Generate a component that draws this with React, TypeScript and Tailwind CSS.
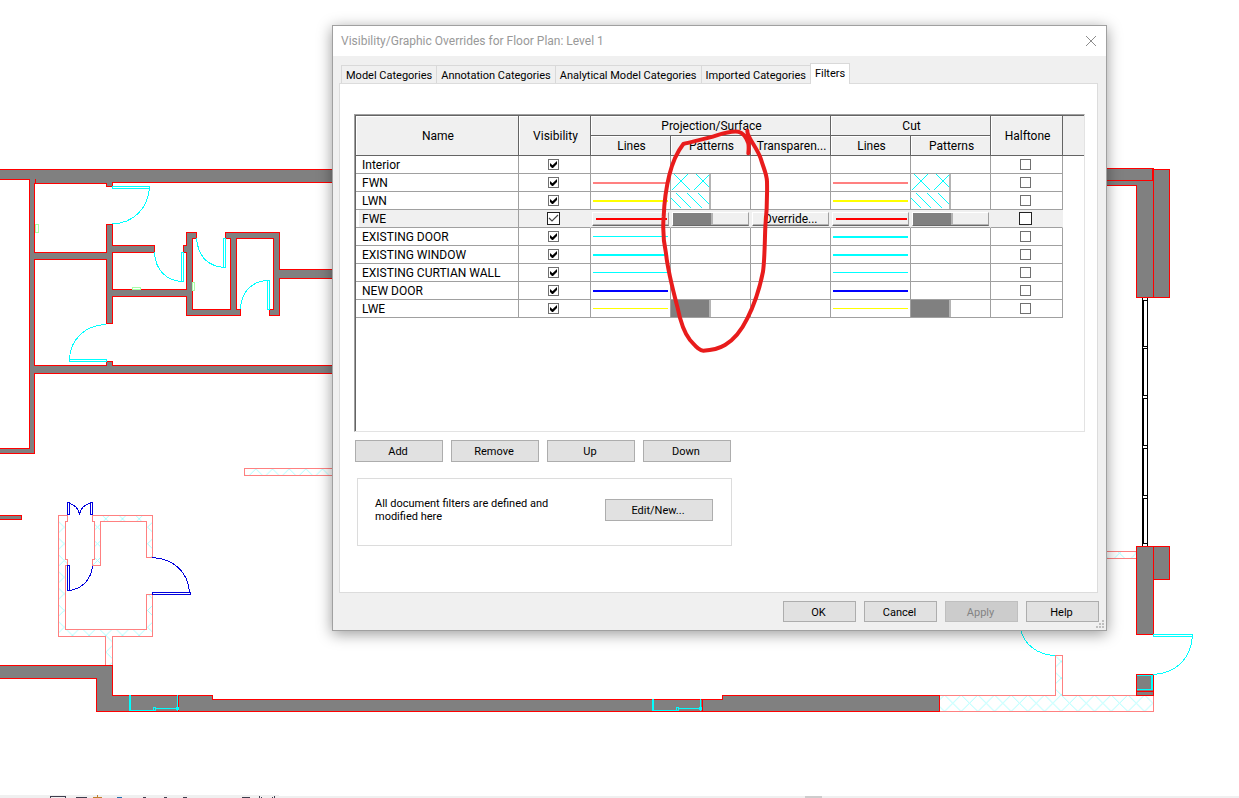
import { useState } from 'react';
import type { ReactNode } from 'react';
import clsx from 'clsx';

type Stroke = { color: string; thick?: boolean; cutThick?: boolean };
type Pattern = 'cross' | 'diagonal' | 'solid';
type Filter = { name: string; line?: Stroke; pattern?: Pattern };

const filters: Filter[] = [
  { name: 'Interior' },
  { name: 'FWN', line: { color: '#ff8080', thick: true, cutThick: true }, pattern: 'cross' },
  { name: 'LWN', line: { color: '#ffff00', thick: true, cutThick: true }, pattern: 'diagonal' },
  { name: 'FWE', line: { color: '#ff0000', thick: true, cutThick: true }, pattern: 'solid' },
  { name: 'EXISTING DOOR', line: { color: '#00ffff', cutThick: true } },
  { name: 'EXISTING WINDOW', line: { color: '#00ffff', thick: true, cutThick: true } },
  { name: 'EXISTING CURTIAN WALL', line: { color: '#00ffff' } },
  { name: 'NEW DOOR', line: { color: '#0000ff', thick: true, cutThick: true } },
  { name: 'LWE', line: { color: '#ffff00' }, pattern: 'solid' },
];

const tabs = [
  'Model Categories',
  'Annotation Categories',
  'Analytical Model Categories',
  'Imported Categories',
  'Filters',
];

// [left, top, right, bottom], edges included
const walls = [
  [-2, 169, 34, 179],
  [29, 169, 34, 453],
  [-2, 448, 34, 453],
  [29, 169, 112, 183],
  [106, 170, 112, 186],
  [106, 169, 340, 182],
  [33, 252, 108, 259],
  [106, 224, 112, 323],
  [111, 245, 154, 252],
  [111, 289, 188, 296],
  [183, 245, 188, 252],
  [186, 232, 192, 315],
  [186, 232, 196, 238],
  [186, 309, 240, 315],
  [230, 232, 236, 315],
  [225, 232, 279, 238],
  [273, 232, 279, 315],
  [269, 309, 279, 315],
  [278, 269, 340, 278],
  [33, 365, 340, 373],
  [106, 361, 112, 368],
  [-2, 515, 21, 519],
  [-2, 665, 112, 678],
  [96, 665, 112, 711],
  [96, 695, 212, 711],
  [180, 699, 730, 711],
  [722, 695, 939, 711],
  [1100, 172, 1153, 185],
  [1136, 168, 1153, 297],
  [1136, 546, 1153, 634],
  [1136, 674, 1153, 695],
];

function FloorPlan() {
  return (
    <svg
      className="absolute inset-0 w-full h-full"
      viewBox="0 0 1239 798"
      preserveAspectRatio="xMinYMin slice"
      shapeRendering="crispEdges"
      aria-hidden="true"
    >
      <defs>
        <pattern id="hatchA" width="16.67" height="16.67" patternUnits="userSpaceOnUse" patternTransform="translate(72.5 635.5)">
          <path d="M0 0L16.67 16.67M16.67 0L0 16.67" stroke="#a8ffff" fill="none" />
        </pattern>
        <pattern id="hatchB" width="16.67" height="16.67" patternUnits="userSpaceOnUse" patternTransform="translate(944.5 711.5)">
          <path d="M0 0L16.67 16.67M16.67 0L0 16.67" stroke="#a8ffff" fill="none" />
        </pattern>
      </defs>

      {/* New partitions */}
      <g stroke="#ff8080">
        <path
          fill="url(#hatchA)"
          d="M58.5 515.5H67.5V521.5H65.5V559.5H67.5V565.5H65.5V629.5H146.5V594.5H152.5V636.5H112.5V666.5H105.5V636.5H58.5z"
        />
        <path
          fill="url(#hatchA)"
          d="M92.5 515.5H152.5V557.5H146.5V521.5H100.5V565.5H92.5V559.5H94.5V521.5H92.5z"
        />
        <path fill="url(#hatchA)" d="M244.5 468.5H340V475.5H244.5z" />
        <path fill="url(#hatchB)" d="M1100 551.5H1136.5V558.5H1100z" />
        <path fill="url(#hatchB)" d="M939.5 695.5H1055.5V655.5H1062.5V695.5H1153.5V711.5H939.5z" />
      </g>

      {/* Existing walls */}
      <g fill="#ff0000">
        {walls.map(([l, t, r, b], i) => (
          <rect key={i} x={l} y={t} width={r - l + 1} height={b - t + 1} />
        ))}
      </g>
      <g fill="#808080">
        {walls.map(([l, t, r, b], i) => (
          <rect key={i} x={l + 1} y={t + 1} width={r - l - 1} height={b - t - 1} />
        ))}
      </g>
      <g fill="#808080" stroke="#ff0000">
        <path d="M1153.5 169.5H1169.5V297.5H1153.5z" />
        <path d="M1153.5 546.5H1169.5V579.5H1153.5z" />
        <path d="M1100 168.5H1152.5V180.5H1100z" />
        <path fill="none" d="M35.5 179V183M178.5 695V711M702.5 699V711M1136 691.5H1153" />
      </g>

      {/* Curtain wall */}
      <g fill="none" stroke="#000">
        <path d="M1142.5 298V546M1147.5 298V546" />
        <path d="M1143.5 300.5H1147V346.5H1143.5zM1143.5 348.5H1147V395.5H1143.5zM1143.5 398.5H1147V445.5H1143.5zM1143.5 448.5H1147V495.5H1143.5zM1143.5 498.5H1147V543.5H1143.5z" />
      </g>

      {/* Existing doors and windows */}
      <g fill="none" stroke="#00ffff">
        <path d="M112.5 186.5H149.5V188.5H112.5zM149.5 188C148 208 134 223 112.5 224" />
        <path d="M181.5 252.5H183.5V281.5H181.5zM154.5 252C155 269 166 281 182 281.5" />
        <path d="M223.5 238.5H225.5V267.5H223.5zM196.5 238C198 256 208 266 224 267.5" />
        <path d="M267.5 280.5H269.5V309.5H267.5zM240.5 309C241 293 251 281 268 280.5" />
        <path d="M69.5 359.5H106.5V361.5H69.5zM69.5 359C70 340 85 325 106 324.5" />
        <path d="M1153.5 634.5H1192.5V636.5H1153.5zM1192.5 636C1191 658 1177 673 1153.5 674.5" />
        <path d="M1020.5 628C1023 644 1037 655 1055.5 655.5" />
        <path d="M129.5 695V711M130.5 695V711M131 710.5H153M153.5 707.5H155.5V710.5H153.5zM155 708.5H177M176.5 707.5H178.5V709.5H176.5zM177.5 695V711" />
        <path d="M652.5 699V711M653.5 699V711M654 710.5H676M676.5 707.5H678.5V710.5H676.5zM678 708.5H700M699.5 707.5H701.5V709.5H699.5zM700.5 699V711" />
        <path d="M1137 675.5H1153M1137 689.5H1153M1151.5 676V690M1152.5 676V690" />
      </g>

      {/* New doors */}
      <g fill="none" stroke="#0000dd">
        <path d="M67.5 502.5H69.5V514.5H67.5zM90.5 502.5H92.5V514.5H90.5zM69 503.5C74 504 79 509 79.5 514.5C80 509 85 504 90 503.5" />
        <path d="M67.5 565.5H69.5V590.5H67.5zM69 590.5C82 589 91 580 92.5 566" />
        <path d="M152.5 592.5H190.5V594.5H152.5zM152.5 557.5C174 559 188 572 189.5 592" />
      </g>

      <path fill="none" stroke="#a8ffa8" d="M35.5 224.5H38.5V232.5H35.5zM132.5 287.5H140.5V289.5H132.5zM192.5 282.5H194.5V290.5H192.5z" />

      {/* View control bar and scroll thumb, cut by the window edge */}
      <path fill="#f0f0f0" d="M0 795H279V796H1239V798H0z" />
      <path fill="#cdcdcd" d="M805 796H822V798H805z" />
      <path fill="none" stroke="#3f3f4f" d="M50.5 798V796.5H65.5V798M76 797.5H87M143 797.5H146M164 797.5H167M183 797.5H187M242 797.5H250M259.5 796V798M261.5 797V798M272.5 797V798M274.5 796V798" />
      <path fill="none" stroke="#c08030" d="M93 797.5H102M97.5 795V798" />
      <path fill="none" stroke="#2070b0" d="M117 797.5H122" />
    </svg>
  );
}

function GridCheck({ label, initial, active }: { label: string; initial: boolean; active: boolean }) {
  const [checked, setChecked] = useState(initial);
  return (
    <span className="flex h-[17px] items-center justify-center pr-0.5">
      <span className="relative flex">
        <input
          type="checkbox"
          aria-label={label}
          checked={checked}
          onChange={() => setChecked(!checked)}
          className={clsx(
            'appearance-none border bg-white',
            active ? 'size-[13px] border-[#222222]' : 'size-[11px] border-[#707070]',
          )}
        />
        {checked && (
          <svg className="pointer-events-none absolute inset-0 h-full w-full" viewBox={active ? '0 0 13 13' : '0 0 11 11'}>
            {active ? (
              <path d="M2 6L5 9L11 3" fill="none" stroke="#444" strokeWidth="1.2" />
            ) : (
              <path d="M2 4V7L4 9H5L9 5V2L4.5 6.2z" fill="#000" />
            )}
          </svg>
        )}
      </span>
    </span>
  );
}

function LineSample({ color, thick }: { color: string; thick?: boolean }) {
  return <span className={clsx('block w-full', thick ? 'h-0.5' : 'h-px')} style={{ backgroundColor: color }} />;
}

function PatternSample({ kind }: { kind: Pattern }) {
  return (
    <svg className="block h-full w-10" viewBox="0 0 40 17" preserveAspectRatio="none" shapeRendering="crispEdges">
      {kind === 'solid' && <rect width="38" height="17" fill="#808080" />}
      {kind === 'cross' && (
        <path d="M0.5 16.5L16.5 0.5M3.5 0.5L19.5 16.5M22.5 16.5L38.5 0.5M25.5 0.5L38.5 13.5" fill="none" stroke="#00ffff" />
      )}
      {kind === 'diagonal' && (
        <path d="M0.5 6.5L10.5 16.5M5.5 1.5L20.5 16.5M16.5 1.5L31.5 16.5M27.5 1.5L38.5 12.5" fill="none" stroke="#00ffff" />
      )}
      <rect x="38" width="2" height="17" fill="#b4b4b4" />
    </svg>
  );
}

function CellButton({ label, children }: { label?: string; children: ReactNode }) {
  return (
    <button
      type="button"
      aria-label={label}
      className="ml-px flex h-3.5 w-[77px] items-center border border-t-white border-l-white border-r-[#a0a0a0] border-b-[#696969] bg-[#f0f0f0] text-xs leading-3 shadow-[inset_0_-1px_#b4b4b4]"
    >
      {children}
    </button>
  );
}

function GraphicsCells({ filter, active, cut }: { filter: Filter; active: boolean; cut?: boolean }) {
  const where = cut ? 'cut' : 'projection';
  const { line, pattern } = filter;
  const sample = line && <LineSample color={line.color} thick={cut ? line.cutThick : line.thick} />;
  const cell = clsx(
    'border-r border-b border-b-[#a0a0a0] p-0',
    active ? 'border-r-transparent bg-[#f0f0f0]' : 'border-r-[#a0a0a0]',
  );

  return (
    <>
      <td className={cell}>
        {active ? (
          <CellButton label={`${filter.name} ${where} lines`}>
            <span className="w-full pl-[3px] pr-px">{sample}</span>
          </CellButton>
        ) : (
          <div className="px-0.5">{sample}</div>
        )}
      </td>
      <td className={cell}>
        {active && pattern ? (
          <CellButton label={`${filter.name} ${where} patterns`}>
            <PatternSample kind={pattern} />
          </CellButton>
        ) : (
          <div className="h-[17px]">{pattern && <PatternSample kind={pattern} />}</div>
        )}
      </td>
    </>
  );
}

function FilterGrid() {
  const head =
    'border-r border-b border-[#646464] bg-[#f0f0f0] py-0 pr-0 pl-0.5 text-center font-normal shadow-[inset_1px_1px_#ffffff]';

  return (
    <div className="relative min-h-[318px] border border-t-[#a0a0a0] border-l-[#a0a0a0] border-r-[#e3e3e3] border-b-[#e3e3e3]">
      <div className="border-t border-l border-[#646464] min-h-[316px]">
        <table className="w-full table-fixed border-separate border-spacing-0 text-xs leading-4">
          <colgroup>
            <col className="w-[163px]" />
            <col className="w-[72px]" />
            <col className="w-20" />
            <col className="w-20" />
            <col className="w-20" />
            <col className="w-20" />
            <col className="w-20" />
            <col className="w-[72px]" />
            <col />
          </colgroup>
          <thead>
            <tr className="h-5">
              <th rowSpan={2} className={head}>Name</th>
              <th rowSpan={2} className={head}>Visibility</th>
              <th colSpan={3} className={head}>Projection/Surface</th>
              <th colSpan={2} className={head}>Cut</th>
              <th rowSpan={2} className={head}>Halftone</th>
              <td rowSpan={2} className="border-b border-[#646464] bg-[#f0f0f0] p-0" />
            </tr>
            <tr className="h-5">
              <th className={head}>Lines</th>
              <th className={head}>Patterns</th>
              <th className={head}>Transparen...</th>
              <th className={head}>Lines</th>
              <th className={head}>Patterns</th>
            </tr>
          </thead>
          <tbody>
            {filters.map((filter) => {
              const active = filter.name === 'FWE';
              return (
                <tr key={filter.name} className="h-[18px]">
                  <td className="border-r border-b border-[#a0a0a0] py-0 pr-0 pl-[3px]">
                    <div className={clsx('h-[17px] pl-[3px] leading-[18px] whitespace-nowrap', active && 'bg-[#f0f0f0]')}>{filter.name}</div>
                  </td>
                  <td className={clsx('border-r border-b border-[#a0a0a0] p-0', active && 'border-r-transparent bg-[#f0f0f0]')}>
                    <GridCheck label={`${filter.name} visibility`} initial active={active} />
                  </td>
                  <GraphicsCells filter={filter} active={active} />
                  {active ? (
                    <td className="border-r border-b border-r-transparent border-b-[#a0a0a0] bg-[#f0f0f0] p-0">
                      <CellButton>
                        <span className="w-full text-center">Override...</span>
                      </CellButton>
                    </td>
                  ) : (
                    <td className="border-r border-b border-[#a0a0a0] p-0" />
                  )}
                  <GraphicsCells filter={filter} active={active} cut />
                  <td className={clsx('border-r border-b border-[#a0a0a0] p-0', active && 'border-r-transparent bg-[#f0f0f0]')}>
                    <GridCheck label={`${filter.name} halftone`} initial={false} active={active} />
                  </td>
                  <td className="p-0" />
                </tr>
              );
            })}
          </tbody>
        </table>
      </div>
      <Markup />
    </div>
  );
}

// Freehand loop over the Patterns column
function Markup() {
  return (
    <svg
      className="pointer-events-none absolute -top-[5px] left-[205px] h-[260px] w-[300px]"
      viewBox="0 0 900 780"
      fill="none"
      stroke="#e81c1c"
      strokeWidth="12"
      strokeLinecap="round"
      strokeLinejoin="round"
      aria-hidden="true"
    >
      <path d="M562 62C560 80 590 110 602 145C612 178 621 195 621 215C622 260 620 310 616 350C614 400 614 450 609 485C600 530 580 590 562 625C545 660 520 690 495 705C475 717 452 721 430 722C415 721 405 706 390 690C372 668 360 630 352 590C340 545 322 470 318 430C308 385 309 345 311 320C313 270 318 235 328 195C338 155 352 125 370 102C400 94 440 86 470 76C495 68 515 62 535 65C550 68 560 85 565 100C567 112 566 120 565 130" />
    </svg>
  );
}

function DialogButton({ children, className, disabled }: { children: ReactNode; className: string; disabled?: boolean }) {
  return (
    <button
      type="button"
      disabled={disabled}
      className={clsx(
        'border pr-0.5 text-center',
        disabled ? 'border-[#bfbfbf] bg-[#cccccc] text-[#838383]' : 'border-[#adadad] bg-[#e1e1e1]',
        className,
      )}
    >
      {children}
    </button>
  );
}

export default function App() {
  const [tab, setTab] = useState('Filters');

  return (
    <div className="relative min-h-screen overflow-hidden bg-white font-[Roboto,sans-serif] text-[11px] leading-[13px] text-black">
      <FloorPlan />

      <div
        role="dialog"
        aria-labelledby="dialog-title"
        className="absolute top-[25px] right-[132px] left-[332px] border border-[#a0a0a0] bg-[#f0f0f0] shadow-[0_3px_14px_rgba(0,0,0,0.4)]"
      >
        <div className="flex h-[30px] items-center justify-between bg-white pr-2 pl-2">
          <h1 id="dialog-title" className="text-xs text-[#999999]">Visibility/Graphic Overrides for Floor Plan: Level 1</h1>
          <button type="button" aria-label="Close" className="flex size-3.5 items-center justify-center">
            <svg className="size-3" viewBox="0 0 12 12" fill="none" stroke="#8c8c8c">
              <path d="M1 1L11 11M11 1L1 11" />
            </svg>
          </button>
        </div>

        <div className="pt-[7px] pr-2 pl-1.5">
          <div role="tablist" className="flex h-5 items-end pl-0.5">
            {tabs.map((name) => (
              <button
                key={name}
                type="button"
                role="tab"
                aria-selected={tab === name}
                onClick={() => setTab(name)}
                className={clsx(
                  'border-t border-l border-[#d9d9d9] px-1 whitespace-nowrap',
                  tab === name ? 'relative -mb-px h-[21px] border-r bg-white pb-0.5' : 'h-[18px] pt-0.5',
                )}
              >
                {name}
              </button>
            ))}
          </div>

          <div role="tabpanel" className="border border-[#dcdcdc] bg-white pt-[30px] pr-3 pb-[46px] pl-3.5">
            <FilterGrid />

            <div className="mt-2 ml-px flex gap-2">
              <DialogButton className="h-[22px] w-[88px]">Add</DialogButton>
              <DialogButton className="h-[22px] w-[88px]">Remove</DialogButton>
              <DialogButton className="h-[22px] w-[88px]">Up</DialogButton>
              <DialogButton className="h-[22px] w-[88px]">Down</DialogButton>
            </div>

            <div className="mt-4 ml-[3px] flex h-[68px] w-[375px] items-start justify-between border border-[#dcdcdc] pr-[18px] pl-[17px]">
              <p className="mt-[18px] w-[180px]">All document filters are defined and modified here</p>
              <DialogButton className="mt-5 h-[22px] w-[108px]">Edit/New...</DialogButton>
            </div>
          </div>
        </div>

        <div className="flex justify-end gap-2 py-2 pr-[7px]">
          <DialogButton className="h-[21px] w-[73px] pt-0.5">OK</DialogButton>
          <DialogButton className="h-[21px] w-[73px] pt-0.5">Cancel</DialogButton>
          <DialogButton className="h-[21px] w-[73px] pt-0.5" disabled>Apply</DialogButton>
          <DialogButton className="h-[21px] w-[73px] pt-0.5">Help</DialogButton>
        </div>
        <svg className="absolute right-0.5 bottom-0.5 size-2" viewBox="0 0 8 8" fill="#bfbfbf" aria-hidden="true">
          <path d="M6 0h2v2H6zM3 3h2v2H3zM6 3h2v2H6zM0 6h2v2H0zM3 6h2v2H3zM6 6h2v2H6z" />
        </svg>
      </div>
    </div>
  );
}
